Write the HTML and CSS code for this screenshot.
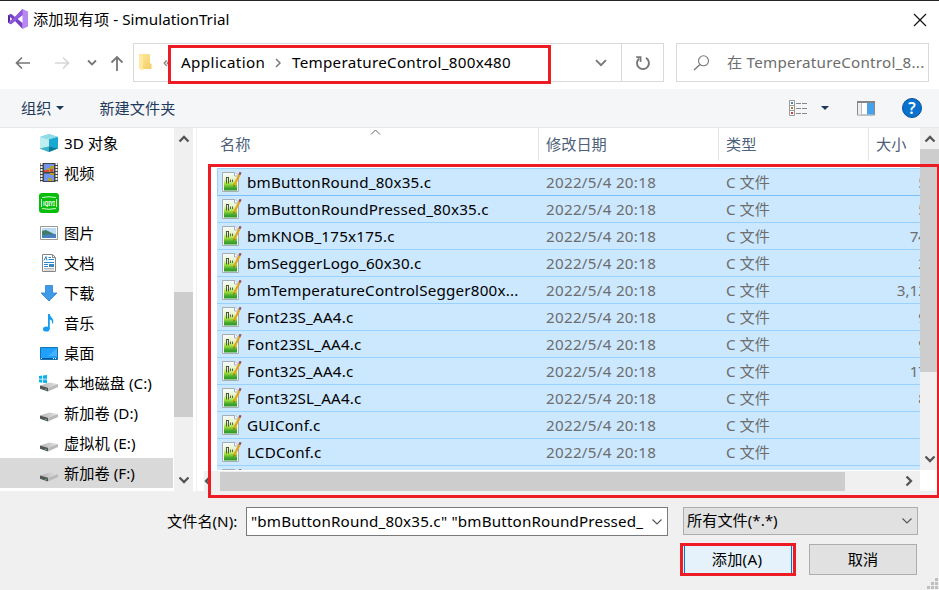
FILE: index.html
```html
<!DOCTYPE html>
<html lang="zh-CN">
<head>
    <meta charset="UTF-8">
    <meta name="viewport" content="width=device-width, initial-scale=1.0">
    <title>添加现有项 - SimulationTrial</title>
    <link rel="stylesheet" href="styles.css">
</head>
<body>
    <!-- 共用图标 -->
    <svg class="defs" width="0" height="0">
        <defs>
            <linearGradient id="green" x1="0" y1="0" x2="0" y2="1">
                <stop offset="0" stop-color="#f5faf5"/>
                <stop offset="0.35" stop-color="#e4f3c4"/>
                <stop offset="0.6" stop-color="#a5e03c"/>
                <stop offset="0.85" stop-color="#3fa52c"/>
                <stop offset="1" stop-color="#2f9a2c"/>
            </linearGradient>
            <linearGradient id="metal" x1="0" y1="0" x2="1" y2="0">
                <stop offset="0" stop-color="#b5b5b5"/>
                <stop offset="1" stop-color="#e2e2e4"/>
            </linearGradient>
            <linearGradient id="folder" x1="0" y1="0" x2="1" y2="1">
                <stop offset="0" stop-color="#ffe9a2"/>
                <stop offset="1" stop-color="#f3cc62"/>
            </linearGradient>
        </defs>
        <symbol id="file-c" viewBox="0 0 20 20">
            <path d="M.5 .5H13l3.500 3.500V19.500H.5z" fill="#f4f8f8" stroke="#a3aeb5"/>
            <path d="M2 2h10v3h3v13.500H2z" fill="url(#green)"/>
            <path d="M12.500 .5V4h4" fill="#fff" stroke="#a3aeb5"/>
            <path d="M4.500 5.500v6M6.500 5.500v6M4 5.500h3" fill="none" stroke="#3c4438" stroke-width=".9"/>
            <path d="M8.500 7.500v2.500M10.500 7.500v2.500" fill="none" stroke="#4c5646" stroke-width=".9"/>
            <path d="M17.600 2.500L12 13.500" stroke="#e3a51c" stroke-width="2.200"/>
            <path d="M18.600 .2L17.400 2.800" stroke="#96505e" stroke-width="2.200"/>
            <path d="M11.800 12.600l-.7 2.600 2-1.700z" fill="#7a6631"/>
        </symbol>
        <symbol id="drive" viewBox="0 0 20 20">
            <path d="M1 12.500L10.500 9.500 19 11 9 14.800z" fill="url(#metal)"/>
            <path d="M1 12.500L9 14.800V18.500L1 15.800z" fill="#555"/>
            <path d="M9 14.800L19 11V14L9 18.500z" fill="#b9b9bb"/>
            <path d="M6 15.800h1.500v1.200H6z" fill="#4fc06a"/>
        </symbol>
        <symbol id="chev-up" viewBox="0 0 12 8">
            <path d="M1.500 6.500L6 2l4.500 4.500" fill="none" stroke="#555" stroke-width="2.300"/>
        </symbol>
        <symbol id="chev-down" viewBox="0 0 12 8">
            <path d="M1.500 1.500L6 6l4.500-4.500" fill="none" stroke="#555" stroke-width="2.300"/>
        </symbol>
        <symbol id="thin-down" viewBox="0 0 12 8">
            <path d="M1.500 1.500L6 6l4.500-4.500" fill="none" stroke="#555" stroke-width="1.100"/>
        </symbol>
    </svg>

    <div class="dialog">
        <div class="titlebar">
            <svg class="logo" width="20" height="20" viewBox="0 0 20 20">
                <path d="M14.500 0L20 2.400V17.600L14.500 20z" fill="#b788f2"/>
                <path fill-rule="evenodd" d="M0 6.200L3 4.700 7 8 14.500 0V20L7 12 3 15.300 0 13.800zM2 8v4l2.300-2zM9.500 10l5 4V6z" fill="#7740c4"/>
                <path d="M0 6.200L2 8v4L0 13.800z" fill="#55269b"/>
                <path d="M7 8L14.500 0V6L3 15.300 0 13.800 2 12z" fill="#8f58dc"/>
            </svg>
            <span class="title">添加现有项 - SimulationTrial</span>
            <svg class="close" width="14" height="14" viewBox="0 0 14 14">
                <path d="M1 1l12 12M13 1L1 13" stroke="#111" stroke-width="1.200"/>
            </svg>
        </div>

        <div class="navbar">
            <div class="nav-buttons">
                <svg width="16" height="14" viewBox="0 0 16 14"><path d="M15 7H1.500M7 1.500L1.500 7 7 12.500" fill="none" stroke="#777" stroke-width="1.700"/></svg>
                <svg width="16" height="14" viewBox="0 0 16 14"><path d="M1 7h13.500M9 1.500L14.500 7 9 12.500" fill="none" stroke="#d6d6d6" stroke-width="1.700"/></svg>
                <svg width="10" height="8" viewBox="0 0 10 8"><path d="M1 1.500l4 4 4-4" fill="none" stroke="#777" stroke-width="1.800"/></svg>
                <svg width="14" height="16" viewBox="0 0 14 16"><path d="M7 16V2M1.500 7.500L7 2l5.500 5.500" fill="none" stroke="#777" stroke-width="1.800"/></svg>
            </div>
            <div class="address">
                <svg class="folder" width="13" height="17" viewBox="0 0 13 17">
                    <path d="M0 0h11v9l1.500 1v5H0z" fill="url(#folder)"/>
                    <path d="M0 0l4 2.500V17L0 14.500z" fill="#ffe8a0"/>
                </svg>
                <span class="overflow">«</span>
                <span class="crumb">Application</span>
                <svg class="crumb-arrow" width="6" height="10" viewBox="0 0 6 10"><path d="M1 1l4 4-4 4" fill="none" stroke="#777" stroke-width="1.500"/></svg>
                <span class="crumb last">TemperatureControl_800x480</span>
                <svg class="address-drop" width="12" height="8" viewBox="0 0 12 8"><path d="M1 1.200l5 5 5-5" fill="none" stroke="#777" stroke-width="1.900"/></svg>
                <div class="refresh">
                    <svg width="16" height="16" viewBox="0 0 16 16">
                        <path d="M11 2.900A6 6 0 1 1 4.200 3.400" fill="none" stroke="#777" stroke-width="1.900"/>
                        <path d="M1.200 2.200H5.600V7" fill="none" stroke="#777" stroke-width="1.700"/>
                    </svg>
                </div>
                <div class="mark mark-address"></div>
            </div>
            <div class="search">
                <svg width="17" height="16" viewBox="0 0 17 16">
                    <circle cx="10.500" cy="5.800" r="5" fill="none" stroke="#777" stroke-width="1.100"/>
                    <path d="M7 9.500L1 15" stroke="#777" stroke-width="1.300"/>
                </svg>
                <span>在 TemperatureControl_8...</span>
            </div>
        </div>

        <div class="toolbar">
            <span class="organize">组织</span>
            <i class="caret"></i>
            <span class="new-folder">新建文件夹</span>
            <svg class="view" width="19" height="17" viewBox="0 0 19 17">
                <path d="M.5 .5h5v15h-5zM.5 5.500h5M.5 10.500h5" fill="#fff" stroke="#999"/>
                <path d="M2 2h2v2H2z" fill="#4385b5"/>
                <path d="M2 7h2v2H2z" fill="#b87a45"/>
                <path d="M2 12h2v2H2z" fill="#d63a3a"/>
                <path d="M7 3.500h5M13 3.500h5M7 8.500h5M13 8.500h5M7 13.500h5M13 13.500h5" stroke="#888"/>
            </svg>
            <i class="caret view-caret"></i>
            <svg class="preview" width="18" height="15" viewBox="0 0 18 15">
                <path d="M.5 .5h17v13.500H.5z" fill="#fff" stroke="#8a8a8a"/>
                <path d="M0 0h18v2H0z" fill="#858585"/>
                <path d="M1 2.500h3v11H1z" fill="#eee"/>
                <path d="M4.500 2v12" stroke="#bbb"/>
                <path d="M10 2h7v11.500h-7z" fill="#48a2ea"/>
            </svg>
            <span class="help">?</span>
        </div>

        <div class="content">
            <div class="tree">
                <div class="tree-item">
                    <svg width="20" height="20" viewBox="0 0 20 20">
                        <path d="M1 4L10 1l9 3v11.500L10 19 1 15.500z" fill="#62cbdc"/>
                        <path d="M1 4L10 1l9 3-9 2.500z" fill="#8fdbe8"/>
                        <path d="M1 4L10 6.500v7L1 15.500z" fill="#bdeef0"/>
                        <path d="M10 6.500L19 4v11.500l-9-2z" fill="#1aa8d2"/>
                        <path d="M1 15.500l9-2V19z" fill="#3fb4c8"/>
                        <path d="M10 13.500l9 2L10 19z" fill="#087b9b"/>
                    </svg>
                    <span>3D 对象</span>
                </div>
                <div class="tree-item">
                    <svg width="20" height="20" viewBox="0 0 20 20">
                        <path d="M1 0h18v19H1z" fill="#444"/>
                        <path d="M5 1h10v8H5zM5 10.500h10V18H5z" fill="#7096eb"/>
                        <path d="M2.500 0v19M17.500 0v19" stroke="#f4f4f4" stroke-width="2" stroke-dasharray="2 1"/>
                        <path d="M8 5h3V3h4v3h-2v3H8zM9 15h3l2 3H9zM11 10h4v2h-4z" fill="#b4a02e"/>
                        <path d="M5 7h5v2H5zM11 6h3v3h-3z" fill="#d94a31"/>
                    </svg>
                    <span>视频</span>
                </div>
                <div class="tree-item">
                    <svg width="20" height="20" viewBox="0 0 20 20">
                        <rect width="20" height="20" rx="3" fill="#08bd0b"/>
                        <path d="M3 4.500q7-1.500 14 0M3 15.500q7 1.500 14 0M2.500 6v8M17.500 6v8" fill="none" stroke="#caffca"/>
                        <text x="4" y="12.500" textLength="12" lengthAdjust="spacingAndGlyphs" class="qiyi">iQIYI</text>
                    </svg>
                </div>
                <div class="tree-item">
                    <svg width="20" height="20" viewBox="0 0 20 20">
                        <path d="M1.500 3.500h17v13h-17z" fill="#fff" stroke="#999"/>
                        <path d="M3 5h14v10H3z" fill="#b9dcf4"/>
                        <path d="M3 8l4-1 10 5v3H3z" fill="#417b69"/>
                        <path d="M3 12l14-1v4H3z" fill="#477fc1"/>
                    </svg>
                    <span>图片</span>
                </div>
                <div class="tree-item">
                    <svg width="20" height="20" viewBox="0 0 20 20">
                        <path d="M3.500 1.500h10l3 3v14h-13z" fill="#fff" stroke="#858585"/>
                        <path d="M13.500 1.500v3h3" fill="none" stroke="#858585"/>
                        <path d="M5 7.500l2-4 1 4M9.500 4.500H12M9.500 6.500H15M5 9.500h10M5 11.500h4M5 13.500h4" fill="none" stroke="#2989d0"/>
                        <path d="M10 11h5v3h-5z" fill="#3b86ba"/>
                        <path d="M5 15.500h10M5 17h10" stroke="#999" stroke-width=".7"/>
                    </svg>
                    <span>文档</span>
                </div>
                <div class="tree-item">
                    <svg width="20" height="20" viewBox="0 0 20 20"><path d="M6.500 2.500h7V10H18l-8 8-8-8h4.500z" fill="#3d9ae8" stroke="#2c82cc" stroke-width=".8"/></svg>
                    <span>下载</span>
                </div>
                <div class="tree-item">
                    <svg width="20" height="20" viewBox="0 0 20 20">
                        <ellipse cx="7.300" cy="16" rx="3.300" ry="2.600" fill="#159cf0"/>
                        <path d="M9 1h1.800c.5 3.500 4.500 4.200 3.400 9.500h-1c.3-2.300-.8-3.400-2.400-4V16H9z" fill="#159cf0"/>
                    </svg>
                    <span>音乐</span>
                </div>
                <div class="tree-item">
                    <svg width="20" height="20" viewBox="0 0 20 20">
                        <path d="M1.500 4.500h17v12h-17z" fill="#1ea0fb" stroke="#1473b5"/>
                        <path d="M18 5v8l-9 0z" fill="#43b2ff"/>
                        <path d="M2 15.500h16" stroke="#0b579a"/>
                        <path d="M2 15.500h1M14 15.500h1M16 15.500h1" stroke="#fff"/>
                    </svg>
                    <span>桌面</span>
                </div>
                <div class="tree-item">
                    <svg width="20" height="20" viewBox="0 0 20 20">
                        <use href="#drive"/>
                        <path d="M0 3l3.200-.5v3.200H0zM4 2.400L8 2v3.700H4zM0 6.500h3.200v3.200L0 9.200zM4 6.500h4v3.700l-4-.5z" fill="#10b3e8"/>
                    </svg>
                    <span>本地磁盘 (C:)</span>
                </div>
                <div class="tree-item">
                    <svg width="20" height="20"><use href="#drive"/></svg>
                    <span>新加卷 (D:)</span>
                </div>
                <div class="tree-item">
                    <svg width="20" height="20"><use href="#drive"/></svg>
                    <span>虚拟机 (E:)</span>
                </div>
                <div class="tree-item selected">
                    <svg width="20" height="20"><use href="#drive"/></svg>
                    <span>新加卷 (F:)</span>
                </div>
            </div>
            <div class="scroll-v tree-scroll">
                <svg width="12" height="8"><use href="#chev-up"/></svg>
                <div class="thumb"></div>
                <svg width="12" height="8"><use href="#chev-down"/></svg>
            </div>

            <div class="files">
                <div class="list">
                    <div class="list-head">
                        <svg class="sort" width="11" height="6" viewBox="0 0 11 6"><path d="M1 5.500L5.500 1 10 5.500" fill="none" stroke="#666"/></svg>
                        <span>名称</span>
                        <span>修改日期</span>
                        <span>类型</span>
                        <span>大小</span>
                    </div>
                    <div class="rows">
                        <div class="row focused"><svg width="20" height="20"><use href="#file-c"/></svg><span class="name">bmButtonRound_80x35.c</span><span class="date">2022/5/4 20:18</span><span class="type">C 文件</span><span class="size">5</span></div>
                        <div class="row"><svg width="20" height="20"><use href="#file-c"/></svg><span class="name">bmButtonRoundPressed_80x35.c</span><span class="date">2022/5/4 20:18</span><span class="type">C 文件</span><span class="size">5</span></div>
                        <div class="row"><svg width="20" height="20"><use href="#file-c"/></svg><span class="name">bmKNOB_175x175.c</span><span class="date">2022/5/4 20:18</span><span class="type">C 文件</span><span class="size">74</span></div>
                        <div class="row"><svg width="20" height="20"><use href="#file-c"/></svg><span class="name">bmSeggerLogo_60x30.c</span><span class="date">2022/5/4 20:18</span><span class="type">C 文件</span><span class="size">2</span></div>
                        <div class="row"><svg width="20" height="20"><use href="#file-c"/></svg><span class="name">bmTemperatureControlSegger800x...</span><span class="date">2022/5/4 20:18</span><span class="type">C 文件</span><span class="size">3,12</span></div>
                        <div class="row"><svg width="20" height="20"><use href="#file-c"/></svg><span class="name">Font23S_AA4.c</span><span class="date">2022/5/4 20:18</span><span class="type">C 文件</span><span class="size">9</span></div>
                        <div class="row"><svg width="20" height="20"><use href="#file-c"/></svg><span class="name">Font23SL_AA4.c</span><span class="date">2022/5/4 20:18</span><span class="type">C 文件</span><span class="size">9</span></div>
                        <div class="row"><svg width="20" height="20"><use href="#file-c"/></svg><span class="name">Font32S_AA4.c</span><span class="date">2022/5/4 20:18</span><span class="type">C 文件</span><span class="size">17</span></div>
                        <div class="row"><svg width="20" height="20"><use href="#file-c"/></svg><span class="name">Font32SL_AA4.c</span><span class="date">2022/5/4 20:18</span><span class="type">C 文件</span><span class="size">8</span></div>
                        <div class="row"><svg width="20" height="20"><use href="#file-c"/></svg><span class="name">GUIConf.c</span><span class="date">2022/5/4 20:18</span><span class="type">C 文件</span><span class="size"></span></div>
                        <div class="row"><svg width="20" height="20"><use href="#file-c"/></svg><span class="name">LCDConf.c</span><span class="date">2022/5/4 20:18</span><span class="type">C 文件</span><span class="size"></span></div>
                        <div class="row"><svg width="20" height="20"><use href="#file-c"/></svg></div>
                    </div>
                    <div class="scroll-h">
                        <svg width="8" height="12" viewBox="0 0 8 12"><path d="M6.500 1.500L2 6l4.500 4.500" fill="none" stroke="#555" stroke-width="2.300"/></svg>
                        <div class="thumb"></div>
                        <svg class="right" width="8" height="12" viewBox="0 0 8 12"><path d="M1.500 1.500L6 6l-4.500 4.500" fill="none" stroke="#555" stroke-width="2.300"/></svg>
                    </div>
                </div>
                <div class="scroll-v list-scroll">
                    <svg width="12" height="8"><use href="#chev-up"/></svg>
                    <div class="thumb"></div>
                    <svg width="12" height="8"><use href="#chev-down"/></svg>
                </div>
            </div>
            <div class="mark mark-files"></div>
        </div>

        <div class="footer">
            <div class="fields">
                <label class="file-label">文件名(N):</label>
                <div class="combo">
                    <span>"bmButtonRound_80x35.c" "bmButtonRoundPressed_</span>
                    <svg width="12" height="8"><use href="#thin-down"/></svg>
                </div>
                <div class="combo filter">
                    <span>所有文件(*.*)</span>
                    <svg width="12" height="8"><use href="#thin-down"/></svg>
                </div>
            </div>
            <div class="actions">
                <div class="add-wrap"><button class="btn add">添加(A)</button></div>
                <button class="btn cancel">取消</button>
            </div>
            <svg class="grip" width="12" height="12" viewBox="0 0 12 12">
                <path d="M8 0h3v3H8zM4 4h3v3H4zM8 4h3v3H8zM0 8h3v3H0zM4 8h3v3H4zM8 8h3v3H8z" fill="#bfbfbf"/>
            </svg>
        </div>
    </div>
</body>
</html>
```
FILE: styles.css
```css
* {
    margin: 0;
    padding: 0;
    box-sizing: border-box;
}

body {
    font-family: "Noto Sans", "Noto Sans CJK SC", sans-serif;
    font-size: 15.2px;
    line-height: 20px;
    color: #000;
    overflow: hidden;
}

svg {
    display: block;
    flex-shrink: 0;
}

span, label {
    white-space: nowrap;
}

.defs {
    position: absolute;
}

.dialog {
    width: 939px;
    height: 590px;
    display: flex;
    flex-direction: column;
    background: #fff;
    border-top: 1px solid #262626;
}

/* 标题栏 */
.titlebar {
    height: 42px;
    display: flex;
    align-items: flex-start;
    padding: 8px 12px 0 8px;
}

.title {
    margin-left: 5px;
    letter-spacing: 0.05px;
}

.close {
    margin: 4px 0 0 auto;
}

/* 地址栏 */
.navbar {
    height: 39px;
    display: flex;
}

.nav-buttons {
    width: 133px;
    display: flex;
    align-items: center;
    padding-left: 15px;
}

.nav-buttons svg:nth-child(2) {
    margin-left: 23px;
}

.nav-buttons svg:nth-child(3) {
    margin-left: 17px;
}

.nav-buttons svg:nth-child(4) {
    margin-left: 13px;
}

.address {
    position: relative;
    width: 531px;
    display: flex;
    align-items: center;
    border: 1px solid #d9d9d9;
    padding-left: 5px;
}

.overflow {
    width: 11px;
    margin-left: 11px;
    padding-bottom: 3px;
    color: #777;
}

.crumb {
    width: 94px;
    margin-left: 7px;
    padding-bottom: 2px;
    letter-spacing: 0.4px;
}

.crumb.last {
    width: auto;
    margin-left: 11px;
    letter-spacing: 0.28px;
}

.address-drop {
    margin-left: auto;
}

.refresh {
    width: 42px;
    height: 37px;
    margin-left: 14px;
    border-left: 1px solid #d9d9d9;
    display: flex;
    align-items: center;
    justify-content: center;
}

.mark {
    position: absolute;
    border: 3px solid #ed1c24;
    z-index: 2;
}

.mark-address {
    left: 34px;
    top: 1px;
    width: 383px;
    height: 39px;
}

.search {
    width: 253px;
    margin-left: 12px;
    border: 1px solid #d9d9d9;
    display: flex;
    align-items: center;
    padding-left: 16px;
    color: #6d6d6d;
}

.search span {
    margin-left: 17px;
    padding-bottom: 2px;
    letter-spacing: 0.24px;
}

/* 工具栏 */
.toolbar {
    height: 39px;
    margin-top: 7px;
    display: flex;
    align-items: center;
    padding: 0 17px 0 21px;
    background: #f5f6f7;
    border-bottom: 1px solid #e5e7ea;
    color: #1e395b;
}

.caret {
    margin-left: 5px;
    border: 4px solid transparent;
    border-top-color: #1e395b;
    border-bottom: 0;
}

.new-folder {
    margin-left: 35px;
}

.view {
    margin-left: auto;
}

.view-caret {
    margin-left: 13px;
}

.preview {
    margin: 0 27px 0 28px;
}

.help {
    width: 20px;
    height: 20px;
    border-radius: 50%;
    border: 1px solid #074f97;
    background: #0872cf;
    color: #fff;
    font-size: 16px;
    font-weight: 600;
    line-height: 18px;
    text-align: center;
}

/* 主体 */
.content {
    position: relative;
    height: 363px;
    display: flex;
}

.tree {
    width: 173px;
}

.tree-item {
    height: 30px;
    display: flex;
    align-items: center;
    padding-left: 39px;
}

.tree-item span {
    margin-left: 5px;
    letter-spacing: 0.05px;
}

.tree-item.selected {
    background: #d9d9d9;
}

.qiyi {
    font-size: 7px;
    font-weight: 700;
    fill: #fff;
}

.scroll-v {
    display: flex;
    flex-direction: column;
    align-items: center;
    background: #f0f0f0;
    width: 19px;
}

.scroll-v svg:last-child {
    margin-top: auto;
}

.thumb {
    background: #cdcdcd;
}

.tree-scroll {
    margin-left: 1px;
    padding: 7px 0;
}

.tree-scroll .thumb {
    width: 19px;
    height: 125px;
    margin-top: 149px;
}

.files {
    flex: 1;
    min-width: 0;
    margin-left: 3px;
    border-left: 1px solid #f0f0f0;
    display: flex;
}

.list {
    width: 723px;
    padding-left: 3px;
}

.list-head {
    position: relative;
    height: 40px;
    display: grid;
    grid-template-columns: 319px 180px 150px 50px;
    margin-left: 20px;
    color: #4c607a;
}

.list-head span {
    height: 33px;
    line-height: 33px;
    padding-left: 7px;
    border-right: 1px solid #e5e5e5;
}

.list-head span:first-of-type {
    padding-left: 0;
}

.list-head span:last-of-type {
    border-right: 0;
}

.sort {
    position: absolute;
    left: 150px;
    top: 1px;
}

.rows {
    height: 302px;
    margin-left: 17px;
    width: 703px;
    overflow: hidden;
    border-top: 1px solid #99d1ff;
}

.row {
    height: 27px;
    display: flex;
    align-items: center;
    padding-left: 5px;
    background: #cce8ff;
    border-bottom: 1px solid #99d1ff;
    color: #6d6d6d;
}

.row span {
    flex-shrink: 0;
}

.row.focused {
    border-left: 1px solid #99d1ff;
    border-bottom-color: #7abfff;
    padding-left: 4px;
}

.name {
    width: 299px;
    margin-left: 5px;
    letter-spacing: 0.2px;
    color: #000;
}

.date {
    width: 180px;
    letter-spacing: 0.28px;
}

.type {
    width: 150px;
}

.size {
    width: 51px;
    text-align: right;
}

.scroll-h {
    height: 20px;
    margin: 1px 0 0 4px;
    width: 716px;
    display: flex;
    align-items: center;
    background: #f0f0f0;
}

.scroll-h .thumb {
    width: 625px;
    height: 19px;
    margin-left: 8px;
}

.scroll-h .right {
    margin: 0 7px 0 auto;
}

.list-scroll {
    height: 342px;
    padding: 7px 0;
}

.list-scroll .thumb {
    width: 19px;
    height: 223px;
    margin-top: 6px;
}

.mark-files {
    left: 208px;
    top: 36px;
    width: 732px;
    height: 334px;
}

/* 底部 */
.footer {
    position: relative;
    flex: 1;
    background: #f0f0f0;
    padding-top: 16px;
}

.fields {
    display: flex;
    align-items: flex-start;
    padding-left: 167px;
}

.file-label {
    width: 79px;
    margin-top: 4px;
}

.combo {
    width: 422px;
    height: 29px;
    display: flex;
    align-items: center;
    justify-content: space-between;
    padding: 0 4px;
    border: 1px solid #7a7a7a;
    background: #fff;
}

.combo span {
    padding-bottom: 2px;
    letter-spacing: 0.16px;
}

.combo.filter {
    width: 235px;
    height: 28px;
    margin-left: 15px;
    padding-left: 3px;
    border-color: #adadad;
    background: #e1e1e1;
}

.combo.filter span {
    letter-spacing: 0;
}

.actions {
    display: flex;
    align-items: center;
    padding: 7px 0 0 680px;
}

.add-wrap {
    width: 116px;
    height: 33px;
    border: 3px solid #ed1c24;
    background: #e1f0fb;
    padding: 0 1px;
}

.btn {
    display: block;
    font: inherit;
    color: #000;
    padding-bottom: 2px;
}

.add {
    width: 108px;
    height: 27px;
    border: 1px solid #0078d7;
    border-width: 0 1px;
    background: #e5f1fb;
    padding-right: 2px;
    letter-spacing: 0.3px;
}

.cancel {
    width: 108px;
    height: 31px;
    margin-left: 13px;
    border: 1px solid #adadad;
    background: #e1e1e1;
}

.grip {
    position: absolute;
    right: 0;
    bottom: 0;
}
```
